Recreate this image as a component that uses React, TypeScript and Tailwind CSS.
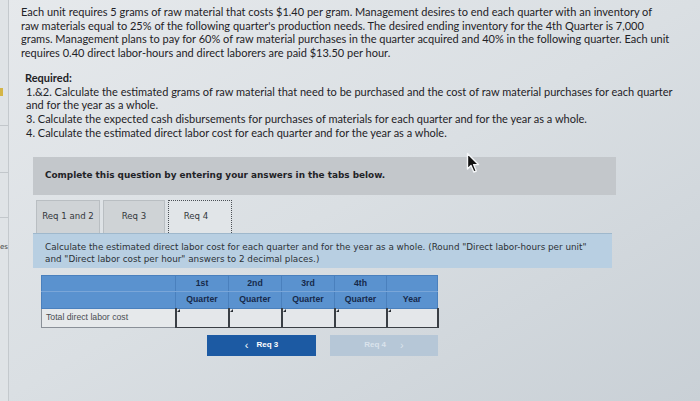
import React from "react";

const intro = [
  "Each unit requires 5 grams of raw material that costs $1.40 per gram. Management desires to end each quarter with an inventory of",
  "raw materials equal to 25% of the following quarter's production needs. The desired ending inventory for the 4th Quarter is 7,000",
  "grams. Management plans to pay for 60% of raw material purchases in the quarter acquired and 40% in the following quarter. Each unit",
  "requires 0.40 direct labor-hours and direct laborers are paid $13.50 per hour.",
];

const required = [
  "1.&2. Calculate the estimated grams of raw material that need to be purchased and the cost of raw material purchases for each quarter",
  "and for the year as a whole.",
  "3. Calculate the expected cash disbursements for purchases of materials for each quarter and for the year as a whole.",
  "4. Calculate the estimated direct labor cost for each quarter and for the year as a whole.",
];

const cols = [
  { top: "1st", bottom: "Quarter" },
  { top: "2nd", bottom: "Quarter" },
  { top: "3rd", bottom: "Quarter" },
  { top: "4th", bottom: "Quarter" },
  { top: "", bottom: "Year" },
];

function Cursor() {
  return (
    <svg width="14" height="22" viewBox="0 0 14 22" className="absolute left-[466px] top-[152px]">
      <path
        d="M1.5 1.5 L1.5 17 L5 13.5 L7.8 20 L10.3 19 L7.6 12.6 L12.5 12.6 Z"
        fill="#111"
        stroke="#f4f6f8"
        strokeWidth="1.4"
        strokeLinejoin="round"
      />
    </svg>
  );
}

function InputCell({ last }: { last?: boolean }) {
  return (
    <td
      className={
        "relative h-[19px] border-b border-l-2 border-[#3a3f45] bg-[#e4e7ea] p-0" +
        (last ? " border-r-2" : "")
      }
    >
      <span className="absolute left-0 top-0 h-0 w-0 rotate-90 border-l-[3px] border-t-[3px] border-l-transparent border-t-[#2a2f35]" />
    </td>
  );
}

export default function App() {
  return (
    <div className="relative h-[401px] w-[700px] overflow-hidden bg-gradient-to-br from-[#e6e9ec] via-[#dadfe3] to-[#c9d0d6]">
      <div className="flex h-full">
        {/* left edge of the page behind */}
        <aside className="flex w-[9px] shrink-0 flex-col border-r border-[#c4c9cd] bg-[#dfe3e6]">
          <div className="h-[88px]" />
          <div className="h-[8px] w-[3px] bg-[#d4b546]" />
          <div className="h-[29px]" />
          <div className="h-[48px] border-y border-[#c2c7cb]" />
          <div className="h-[45px] border-b border-[#c2c7cb]" />
          <div className="pt-[24px] font-['DejaVu_Sans',sans-serif] text-[7px] leading-[10px] text-[#444]">es</div>
        </aside>

        <main className="flex min-w-0 flex-1 flex-col pt-[5px]">
          <div className="pl-[12px] font-['Lato','Liberation_Sans',sans-serif] text-[11px] leading-[13.7px] text-[#1e2226]">
            {intro.map((l) => (
              <p key={l} className="whitespace-nowrap">
                {l}
              </p>
            ))}
          </div>

          <div className="mt-[11px] pl-[16px] font-['Lato','Liberation_Sans',sans-serif] text-[11px] leading-[13.8px] text-[#1e2226]">
            <p className="font-bold">Required:</p>
            {required.map((l) => (
              <p key={l} className="whitespace-nowrap pl-[1px]">
                {l}
              </p>
            ))}
          </div>

          <div className="ml-[24px] mt-[17px] flex h-[38px] w-[583px] items-center bg-[#c3c7cb] pl-[12px] font-['DejaVu_Sans',sans-serif] text-[8.9px] font-bold text-[#1f2327]">
            Complete this question by entering your answers in the tabs below.
          </div>

          <div className="ml-[27px] mt-[5px] flex h-[33px] items-stretch gap-[3px] font-['DejaVu_Sans',sans-serif] text-[8.6px] text-[#33373b]">
            <div className="flex w-[64px] items-center justify-center border border-b-0 border-[#b9bec2] bg-[#cfd3d6]">
              Req 1 and 2
            </div>
            <div className="flex w-[62px] items-center justify-center border border-b-0 border-[#b9bec2] bg-[#cfd3d6]">
              Req 3
            </div>
            <div className="flex w-[64px] items-center justify-center border border-b-0 border-dotted border-[#4a4f55] bg-[#e1e5e8] pr-[8px]">
              Req 4
            </div>
          </div>

          <div className="ml-[24px] h-[35px] w-[579px] border-t border-[#9fb8cc] bg-[#b8cfe2] pl-[12px] pt-[7px] font-['DejaVu_Sans',sans-serif] text-[8.8px] leading-[12px] text-[#2c3136]">
            <p className="whitespace-nowrap">
              Calculate the estimated direct labor cost for each quarter and for the year as a whole. (Round "Direct labor-hours per unit"
            </p>
            <p className="whitespace-nowrap">and "Direct labor cost per hour" answers to 2 decimal places.)</p>
          </div>

          <table className="ml-[32px] mt-[7px] w-[396px] table-fixed border-collapse font-['Liberation_Sans',sans-serif] text-[8.7px]">
            <colgroup>
              <col className="w-[134px]" />
              <col className="w-[53px]" />
              <col className="w-[53px]" />
              <col className="w-[53px]" />
              <col className="w-[52px]" />
              <col className="w-[51px]" />
            </colgroup>
            <thead>
              <tr className="h-[16px] bg-[#5a92cf] text-[#16294a]">
                <th className="border border-[#4a80bd] border-b-[#7aa6d8] p-0" />
                {cols.map((c, i) => (
                  <th key={i} className="border border-[#4a80bd] border-b-[#7aa6d8] p-0 text-center font-bold">
                    {c.top}
                  </th>
                ))}
              </tr>
              <tr className="h-[17px] bg-[#5a92cf] text-[#16294a]">
                <th className="border border-t-0 border-[#4a80bd] p-0" />
                {cols.map((c, i) => (
                  <th key={i} className="border border-t-0 border-[#4a80bd] p-0 text-center font-bold">
                    {c.bottom}
                  </th>
                ))}
              </tr>
            </thead>
            <tbody>
              <tr>
                <td className="h-[19px] border border-[#8a9098] bg-[#e6e9eb] pl-[4px] text-[#4a4e53]">
                  Total direct labor cost
                </td>
                <InputCell />
                <InputCell />
                <InputCell />
                <InputCell />
                <InputCell last />
              </tr>
            </tbody>
          </table>

          <div className="ml-[198px] mt-[7px] flex gap-[14px] font-['Liberation_Sans',sans-serif] text-[8px] font-bold">
            <button className="flex h-[21px] w-[109px] items-center justify-center gap-[8px] bg-[#1c5aa3] text-white">
              <span className="text-[11px] font-normal leading-none">‹</span>
              <span>Req 3</span>
            </button>
            <button className="flex h-[21px] w-[108px] items-center justify-center gap-[14px] bg-[#b6c7d7] text-[#dae3ec]">
              <span>Req 4</span>
              <span className="text-[11px] font-normal leading-none">›</span>
            </button>
          </div>
        </main>
      </div>
      <Cursor />
    </div>
  );
}
